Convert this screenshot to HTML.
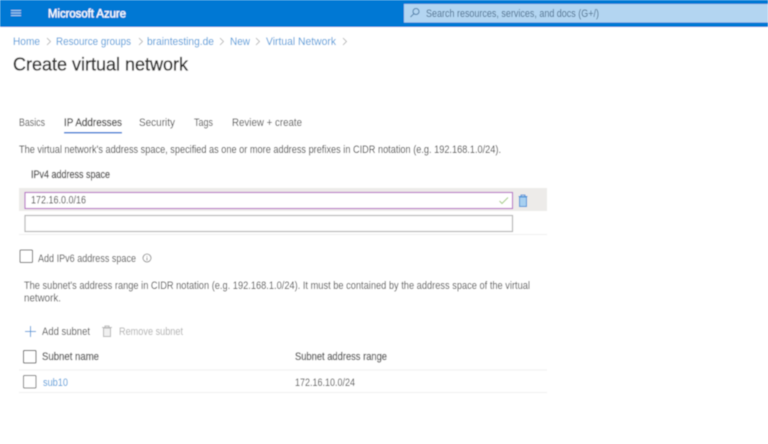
<!DOCTYPE html>
<html>
<head>
<meta charset="utf-8">
<title>Create virtual network</title>
<style>
html,body{margin:0;padding:0;background:#fff;width:768px;height:444px;overflow:hidden}
svg{display:block;position:absolute;left:0;top:0}
text{font-family:"Liberation Sans",sans-serif;font-size:11px;fill:#4a4a4a;white-space:pre}
.l{fill:#4a9ad9}
.s{stroke-width:.2px}
</style>
</head>
<body>
<svg width="768" height="444" viewBox="0 0 768 444" xmlns="http://www.w3.org/2000/svg">
<defs><filter id="b" x="0" y="0" width="100%" height="100%"><feGaussianBlur stdDeviation="0.4"/></filter></defs>
<g filter="url(#b)">
<rect width="768" height="444" fill="#fff"/>
<rect width="768" height="27" fill="#0078d4"/>
<path d="M11 10.500h10M11 13h10M11 15.500h10" stroke="#a9d0f0" stroke-width="1"/>
<text x="48" y="17.500" textLength="78" lengthAdjust="spacingAndGlyphs" style="fill:#fff;font-size:11.500px;stroke:#fff;stroke-width:.3px">Microsoft Azure</text>
<rect x="404" y="4" width="364" height="18.500" fill="#b3d5f1"/>
<circle cx="416" cy="11.500" r="3" fill="none" stroke="#4d7ea8" stroke-width="1"/>
<path d="M413.800 13.800L410.500 17" stroke="#4d7ea8" stroke-width="1"/>
<text x="426" y="17" textLength="173" lengthAdjust="spacingAndGlyphs" style="fill:#4d6f8e">Search resources, services, and docs (G+/)</text>

<text class="l" x="13" y="45" textLength="27" lengthAdjust="spacingAndGlyphs">Home</text>
<text class="l" x="56" y="45" textLength="75" lengthAdjust="spacingAndGlyphs">Resource groups</text>
<text class="l" x="147" y="45" textLength="67" lengthAdjust="spacingAndGlyphs">braintesting.de</text>
<text class="l" x="230" y="45" textLength="20" lengthAdjust="spacingAndGlyphs">New</text>
<text class="l" x="266" y="45" textLength="70" lengthAdjust="spacingAndGlyphs">Virtual Network</text>
<path d="M47 38l3.500 3.500L47 45M139 38l3.500 3.500L139 45M220 38l3.500 3.500L220 45M256 38l3.500 3.500L256 45M343 38l3.500 3.500L343 45" fill="none" stroke="#aaa" stroke-width=".8"/>

<text x="13" y="70.500" textLength="175" lengthAdjust="spacingAndGlyphs" style="font-size:18px;fill:#323130;stroke:#323130;stroke-width:.35px">Create virtual network</text>

<text x="19" y="126" textLength="26" lengthAdjust="spacingAndGlyphs">Basics</text>
<text x="64" y="126" textLength="58" lengthAdjust="spacingAndGlyphs" style="fill:#323130;stroke:#323130" class="s">IP Addresses</text>
<rect x="64" y="132" width="58" height="1.500" fill="#0078d4"/>
<text x="139" y="126" textLength="36" lengthAdjust="spacingAndGlyphs">Security</text>
<text x="194" y="126" textLength="19" lengthAdjust="spacingAndGlyphs">Tags</text>
<text x="232" y="126" textLength="70" lengthAdjust="spacingAndGlyphs">Review + create</text>

<text x="19" y="153" textLength="482" lengthAdjust="spacingAndGlyphs" style="fill:#3c3c3c">The virtual network's address space, specified as one or more address prefixes in CIDR notation (e.g. 192.168.1.0/24).</text>
<text x="31" y="178" textLength="79" lengthAdjust="spacingAndGlyphs" style="fill:#323130;stroke:#323130" class="s">IPv4 address space</text>

<rect x="19" y="188" width="528" height="23" fill="#edebe9"/>
<rect x="25" y="192.500" width="487.500" height="16" fill="#fff" stroke="#b566c4" stroke-width="1.100"/>
<text x="31" y="203.500" textLength="55" lengthAdjust="spacingAndGlyphs" style="fill:#3c3c3c">172.16.0.0/16</text>
<path d="M499.500 201l2.500 2.500 6-6" fill="none" stroke="#a3cd80" stroke-width="1.100"/>
<path d="M518.500 196.500h9M521 196.500v-1.500h4v1.500" fill="none" stroke="#3f93d8" stroke-width="1"/>
<rect x="519.500" y="197" width="7" height="9.500" fill="#a8d0f0" stroke="#3f93d8" stroke-width="1"/>
<rect x="25" y="215.500" width="487.500" height="16" fill="#fff" stroke="#b0b0b0" stroke-width="1.100"/>
<rect x="19" y="234" width="528" height="1" fill="#efefef"/>

<rect x="20" y="250" width="12.500" height="12.500" rx="1" fill="#fff" stroke="#666" stroke-width="1"/>
<text x="38" y="262" textLength="98" lengthAdjust="spacingAndGlyphs">Add IPv6 address space</text>
<circle cx="147" cy="258" r="4" fill="none" stroke="#777" stroke-width=".8"/>
<path d="M147 256v.8M147 257.500v3" stroke="#777" stroke-width=".8"/>

<text x="24" y="289" textLength="506" lengthAdjust="spacingAndGlyphs">The subnet's address range in CIDR notation (e.g. 192.168.1.0/24). It must be contained by the address space of the virtual</text>
<text x="24" y="301.500" textLength="37" lengthAdjust="spacingAndGlyphs">network.</text>

<path d="M30.500 326v11M25 331.500h11" stroke="#4a9ad9" stroke-width="1"/>
<text x="42" y="335" textLength="48" lengthAdjust="spacingAndGlyphs">Add subnet</text>
<path d="M102 327.500h10M105 327.500v-1.500h4v1.500" fill="none" stroke="#b5b5b5" stroke-width="1"/>
<rect x="103.500" y="328" width="7" height="8.500" fill="#f0f0f0" stroke="#b5b5b5" stroke-width="1"/>
<text x="119" y="335" textLength="64" lengthAdjust="spacingAndGlyphs" style="fill:#b0b0b0">Remove subnet</text>

<rect x="23.500" y="350.500" width="12.500" height="12.500" rx="1" fill="#fff" stroke="#555" stroke-width="1"/>
<text x="42" y="360" textLength="57" lengthAdjust="spacingAndGlyphs" style="stroke:#4a4a4a" class="s">Subnet name</text>
<text x="295" y="360" textLength="92" lengthAdjust="spacingAndGlyphs" style="stroke:#4a4a4a" class="s">Subnet address range</text>
<rect x="19" y="369.500" width="528" height="1" fill="#efefef"/>
<rect x="23.500" y="375.500" width="12.500" height="12.500" rx="1" fill="#fff" stroke="#777" stroke-width="1"/>
<text class="l" x="43" y="386" textLength="25" lengthAdjust="spacingAndGlyphs">sub10</text>
<text x="295" y="386" textLength="60" lengthAdjust="spacingAndGlyphs">172.16.10.0/24</text>
<rect x="19" y="392" width="528" height="1" fill="#efefef"/>
</g>
</svg>
</body>
</html>
